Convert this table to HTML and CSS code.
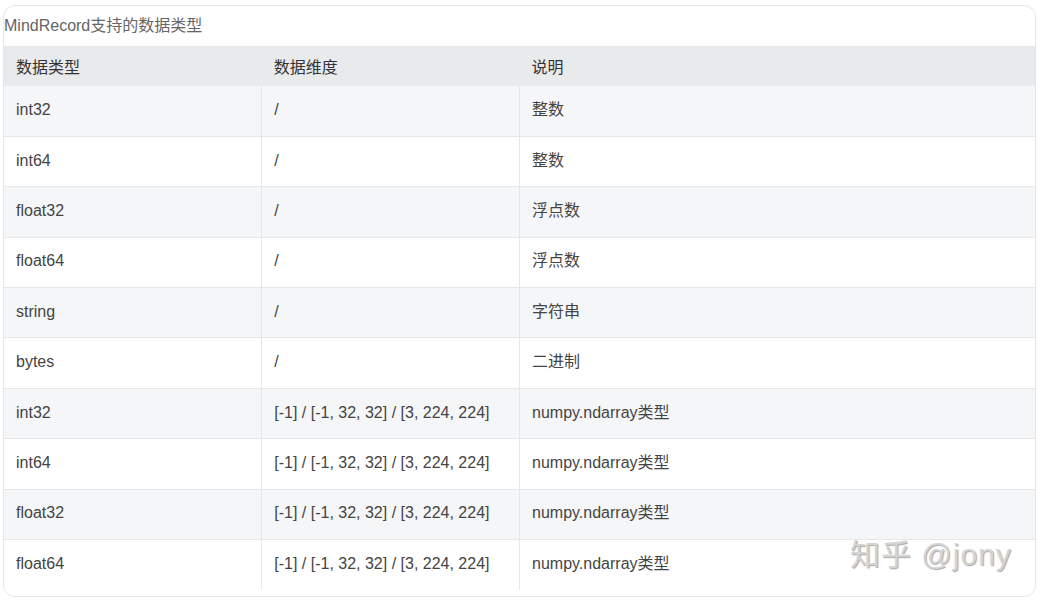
FILE: index.html
```html
<!DOCTYPE html>
<html lang="zh-CN">
<head>
<meta charset="utf-8">
<title>MindRecord支持的数据类型</title>
<link rel="stylesheet" href="styles.css">
</head>
<body>
<div class="card">
  <div class="caption">MindRecord支持的数据类型</div>
  <table class="types">
    <colgroup><col class="c1"><col class="c2"><col class="c3"></colgroup>
    <thead>
      <tr><th>数据类型</th><th>数据维度</th><th>说明</th></tr>
    </thead>
    <tbody>
      <tr><td>int32</td><td>/</td><td>整数</td></tr>
      <tr><td>int64</td><td>/</td><td>整数</td></tr>
      <tr><td>float32</td><td>/</td><td>浮点数</td></tr>
      <tr><td>float64</td><td>/</td><td>浮点数</td></tr>
      <tr><td>string</td><td>/</td><td>字符串</td></tr>
      <tr><td>bytes</td><td>/</td><td>二进制</td></tr>
      <tr><td>int32</td><td>[-1] / [-1, 32, 32] / [3, 224, 224]</td><td>numpy.ndarray类型</td></tr>
      <tr><td>int64</td><td>[-1] / [-1, 32, 32] / [3, 224, 224]</td><td>numpy.ndarray类型</td></tr>
      <tr><td>float32</td><td>[-1] / [-1, 32, 32] / [3, 224, 224]</td><td>numpy.ndarray类型</td></tr>
      <tr><td>float64</td><td>[-1] / [-1, 32, 32] / [3, 224, 224]</td><td>numpy.ndarray类型</td></tr>
    </tbody>
  </table>
</div>
<div class="watermark">知乎 @jony</div>
</body>
</html>
```
FILE: styles.css
```css
html, body {
  margin: 0;
  padding: 0;
  background: #ffffff;
}
body {
  width: 1041px;
  height: 602px;
  overflow: hidden;
  position: relative;
  font-family: "Liberation Sans", Arial, "Noto Sans CJK SC", sans-serif;
}
.card {
  margin: 5px 0 0 3px;
  width: 1033px;
  height: 592px;
  box-sizing: border-box;
  border: 1px solid #e6e6e6;
  border-radius: 12px;
  overflow: hidden;
  display: flex;
  flex-direction: column;
}
.caption {
  height: 40px;
  line-height: 40px;
  font-size: 16px;
  color: #666666;
  padding-left: 0;
  flex: none;
}
.types {
  width: 100%;
  border-collapse: collapse;
  table-layout: fixed;
  font-size: 16px;
  color: #444444;
}
.c1 { width: 25%; }
.c2 { width: 25%; }
.c3 { width: 50%; }
.types th {
  background: #e9eaeb;
  font-weight: normal;
  text-align: left;
  height: 40px;
  padding: 0 12px;
  color: #333333;
}
.types td {
  height: 50.4px;
  padding: 0 12px 2px;
  box-sizing: border-box;
  border-top: 1px solid #e6e7e8;
  vertical-align: middle;
  line-height: 20px;
}
.types tbody tr:first-child td {
  border-top: none;
}
.types td + td {
  border-left: 1px solid #e6e7e8;
}
.types tbody tr:nth-child(odd) td {
  background: #f5f6f7;
}
.watermark {
  position: absolute;
  left: 850px;
  top: 535px;
  font-size: 30px;
  line-height: 40px;
  color: #d4d4d4;
  text-shadow: 1px 1px 1px rgba(0, 0, 0, 0.35);
  font-family: "Liberation Sans", Arial, "Noto Sans CJK SC", sans-serif;
  letter-spacing: 1px;
}
```
